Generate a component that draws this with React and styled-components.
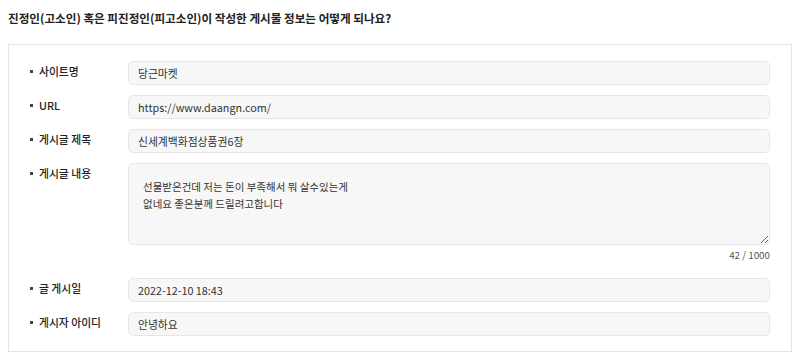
import styled, { createGlobalStyle } from 'styled-components';

const GlobalStyle = createGlobalStyle`
  body {
    margin: 0;
    background: #fff;
    font-family: "Noto Sans CJK KR", "Noto Sans", sans-serif;
    color: #222;
  }
  * { box-sizing: border-box; }
`;

const Page = styled.div`
  padding: 8px 8px 0 8px;
`;

const Title = styled.h2`
  margin: 0;
  font-size: 11.6px;
  font-weight: 700;
  line-height: 20px;
  color: #222;
`;

const Panel = styled.div`
  margin-top: 16px;
  border: 1px solid #e4e4e4;
  padding: 16px 21px 15px 21px;
  display: flex;
  flex-direction: column;
  gap: 10px;
`;

const Row = styled.div`
  display: grid;
  grid-template-columns: 98px 1fr;
  align-items: start;
`;

const Label = styled.div`
  position: relative;
  padding-left: 9px;
  font-size: 10.8px;
  font-weight: 500;
  line-height: 20px;
  color: #222;

  &::before {
    content: '';
    position: absolute;
    left: 0;
    top: 9px;
    width: 3px;
    height: 3px;
    background: #444;
  }
`;

const Field = styled.div`
  height: 24px;
  border: 1px solid #e6e6e6;
  border-radius: 5px;
  background: #f7f7f7;
  padding: 0 9px;
  font-size: 10.8px;
  line-height: 22px;
  color: #333;
`;

const Area = styled.textarea`
  display: block;
  width: 100%;
  height: 82px;
  margin: 0;
  border: 1px solid #e6e6e6;
  border-radius: 5px;
  background: #f7f7f7;
  padding: 14px 14px;
  font-family: inherit;
  font-size: 10.5px;
  line-height: 17px;
  color: #333;
  resize: vertical;
  outline: none;
`;

const Counter = styled.div`
  margin-top: 2px;
  margin-bottom: 5px;
  text-align: right;
  font-size: 9.8px;
  line-height: 16px;
  color: #555;
`;

const rows = [
  { label: '사이트명', value: '당근마켓' },
  { label: 'URL', value: 'https://www.daangn.com/' },
  { label: '게시글 제목', value: '신세계백화점상품권6장' },
];

const rowsAfter = [
  { label: '글 게시일', value: '2022-12-10 18:43' },
  { label: '게시자 아이디', value: '안녕하요' },
];

const content = '선물받은건데 저는 돈이 부족해서 뭐 살수있는게\n없네요 좋은분께 드릴려고합니다';

export default function App() {
  return (
    <Page>
      <GlobalStyle />
      <Title>진정인(고소인) 혹은 피진정인(피고소인)이 작성한 게시물 정보는 어떻게 되나요?</Title>
      <Panel>
        {rows.map(r => (
          <Row key={r.label}>
            <Label>{r.label}</Label>
            <Field>{r.value}</Field>
          </Row>
        ))}
        <Row>
          <Label>게시글 내용</Label>
          <div>
            <Area readOnly defaultValue={content} />
            <Counter>42 / 1000</Counter>
          </div>
        </Row>
        {rowsAfter.map(r => (
          <Row key={r.label}>
            <Label>{r.label}</Label>
            <Field>{r.value}</Field>
          </Row>
        ))}
      </Panel>
    </Page>
  );
}
